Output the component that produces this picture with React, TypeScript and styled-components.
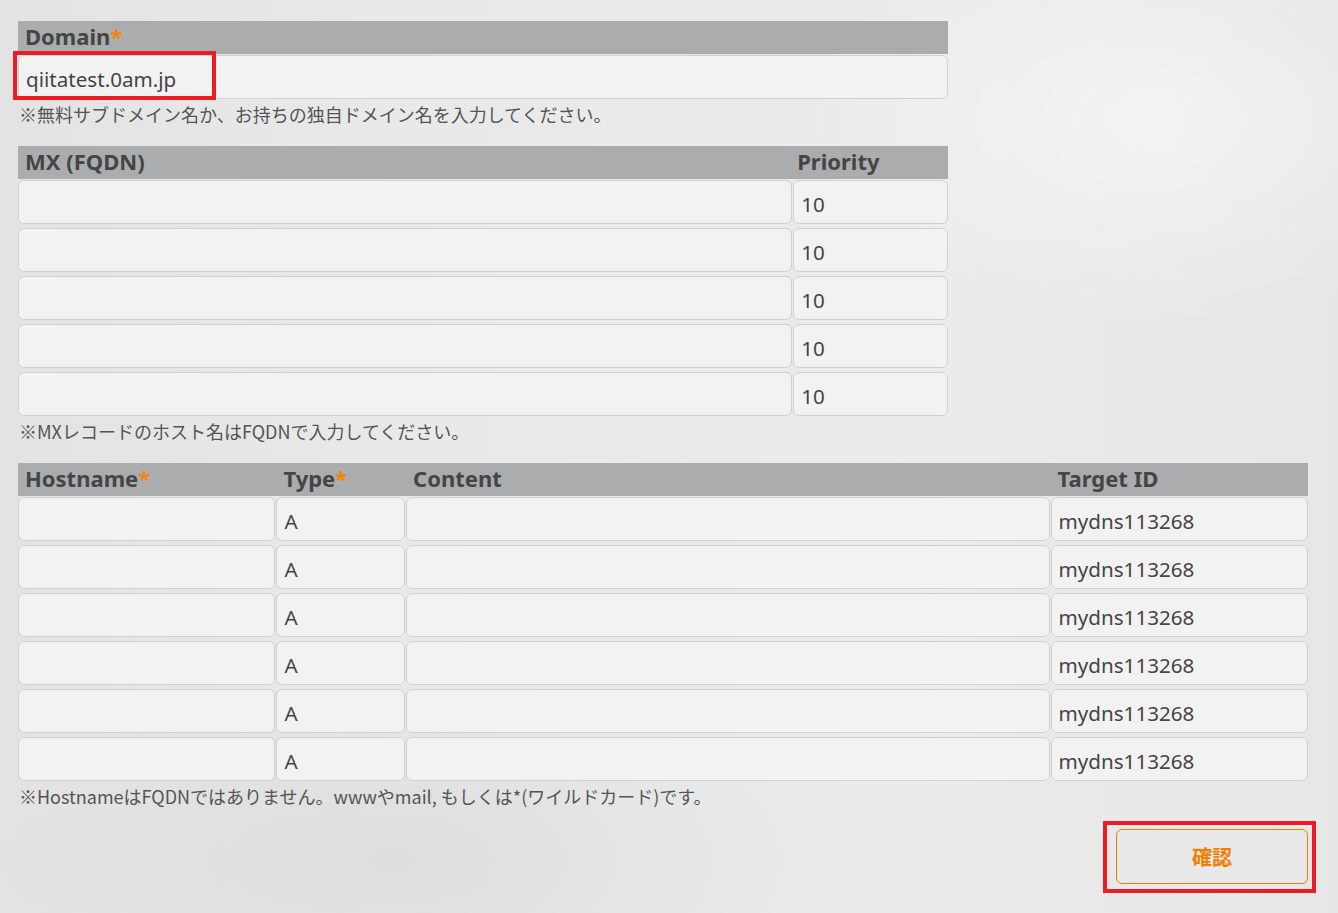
import { ReactNode } from "react";
import styled, { createGlobalStyle } from "styled-components";

const GlobalStyle = createGlobalStyle`
  html, body {
    margin: 0;
    padding: 0;
  }
  body {
    min-height: 913px;
    background:
      radial-gradient(ellipse 500px 300px at 1150px 120px, rgba(255,255,255,0.45), rgba(255,255,255,0) 70%),
      radial-gradient(ellipse 600px 260px at 400px 860px, rgba(200,200,200,0.35), rgba(200,200,200,0) 70%),
      linear-gradient(90deg, #e3e3e3 0%, #e9e9e9 30%, #ebebeb 70%, #e7e7e7 100%);
    font-family: "Noto Sans", "Noto Sans CJK JP", sans-serif;
    color: #444;
  }
`;

const Page = styled.main`
  padding: 21px 0 0 18px;
`;

const Section = styled.section<{ width: number }>`
  width: ${(p) => p.width}px;
`;

const Grid = styled.div<{ columns: string }>`
  display: grid;
  grid-template-columns: ${(p) => p.columns};
  column-gap: 1px;
`;

const HeaderRow = styled(Grid)`
  height: 33px;
  align-items: center;
  background-color: #abacad;
  margin-bottom: 1px;
`;

const HeaderCell = styled.div<{ $inset?: number }>`
  padding-left: ${(p) => p.$inset ?? 7}px;
  padding-bottom: 3px;
  font-family: "Noto Sans", "Noto Sans CJK JP", sans-serif;
  font-weight: 700;
  font-size: 22px;
  color: #454545;
  white-space: nowrap;
  line-height: 30px;
`;

const Required = styled.span`
  color: #f5850a;
`;

const Rows = styled.div`
  display: flex;
  flex-direction: column;
  gap: 4px;
`;

const Field = styled.input`
  box-sizing: border-box;
  width: 100%;
  height: 44px;
  margin: 0;
  padding: 4px 7px 0;
  border: 1px solid #d0d0d0;
  border-radius: 6px;
  background-color: #f2f2f2;
  font-family: "Noto Sans", "Noto Sans CJK JP", sans-serif;
  font-size: 20.6px;
  color: #444;
  outline: none;
`;

const Note = styled.p`
  margin: 3px 0 20px 1px;
  font-family: "Noto Sans CJK JP", sans-serif;
  font-size: 18px;
  line-height: 24px;
  color: #555;
  white-space: nowrap;
`;

const Marked = styled.div`
  position: relative;
`;

const Highlight = styled.div`
  position: absolute;
  left: -5px;
  top: -4px;
  width: 203px;
  height: 49px;
  box-sizing: border-box;
  border: 4px solid #ec1c24;
  pointer-events: none;
`;

const Actions = styled.div`
  width: 1298px;
  display: flex;
  justify-content: flex-end;
`;

const ButtonFrame = styled.div`
  margin-top: -7px;
  padding: 4px 4px 5px 9px;
  border: 4px solid #ec1c24;
`;

const ConfirmButton = styled.button`
  width: 192px;
  height: 55px;
  border: 1px solid #f57c00;
  border-radius: 6px;
  background: transparent;
  color: #f57c00;
  font-family: "Noto Sans CJK JP", sans-serif;
  font-size: 20px;
  font-weight: 700;
  cursor: pointer;
`;

const MX_COLS = "5fr 1fr";
const HOST_COLS = "2fr 1fr 5fr 2fr";

function Label({ children, required }: { children: ReactNode; required?: boolean }) {
  return (
    <HeaderCell>
      {children}
      {required && <Required>*</Required>}
    </HeaderCell>
  );
}

export default function App() {
  const mxRows = [0, 1, 2, 3, 4];
  const hostRows = [0, 1, 2, 3, 4, 5];

  return (
    <>
      <GlobalStyle />
      <Page>
        <Section width={930}>
          <HeaderRow columns="1fr">
            <Label required>Domain</Label>
          </HeaderRow>
          <Marked>
            <Field defaultValue="qiitatest.0am.jp" />
            <Highlight />
          </Marked>
          <Note>※無料サブドメイン名か、お持ちの独自ドメイン名を入力してください。</Note>
        </Section>

        <Section width={930}>
          <HeaderRow columns={MX_COLS}>
            <Label>MX (FQDN)</Label>
            <HeaderCell $inset={4}>Priority</HeaderCell>
          </HeaderRow>
          <Rows>
            {mxRows.map((i) => (
              <Grid key={i} columns={MX_COLS}>
                <Field />
                <Field defaultValue="10" />
              </Grid>
            ))}
          </Rows>
          <Note>※MXレコードのホスト名はFQDNで入力してください。</Note>
        </Section>

        <Section width={1290}>
          <HeaderRow columns={HOST_COLS}>
            <Label required>Hostname</Label>
            <Label required>Type</Label>
            <Label>Content</Label>
            <Label>Target ID</Label>
          </HeaderRow>
          <Rows>
            {hostRows.map((i) => (
              <Grid key={i} columns={HOST_COLS}>
                <Field />
                <Field defaultValue="A" />
                <Field />
                <Field defaultValue="mydns113268" />
              </Grid>
            ))}
          </Rows>
          <Note>※HostnameはFQDNではありません。wwwやmail, もしくは*(ワイルドカード)です。</Note>
        </Section>

        <Actions>
          <ButtonFrame>
            <ConfirmButton type="button">確認</ConfirmButton>
          </ButtonFrame>
        </Actions>
      </Page>
    </>
  );
}
